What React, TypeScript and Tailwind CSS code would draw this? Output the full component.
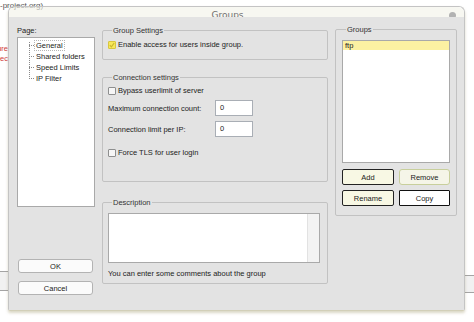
import type { ReactNode } from 'react';

const Group = ({ title, className, children }: { title: string; className?: string; children?: ReactNode }) => (
    <fieldset className={`border border-[#c2c2c2] rounded-[2px] ${className ?? ''}`}>
        <legend className="ml-[4px] px-[1px] leading-[9px] text-[#333]">{title}</legend>
        {children}
    </fieldset>
);

const Check = ({ label, hover }: { label: string; hover?: boolean }) => (
    <div className="flex items-center gap-[2px] h-[9px]">
        {hover ? (
            <span className="w-[8px] h-[8px] rounded-[1px] border border-[#d8c640] bg-[#f7e85a] flex items-center justify-center">
                <svg width="6" height="6" viewBox="0 0 6 6">
                    <path d="M0.8 3.2 L2.4 4.8 L5.2 1" fill="none" stroke="#c9b830" strokeWidth="1.2" />
                </svg>
            </span>
        ) : (
            <span className="w-[8px] h-[8px] rounded-[1px] border border-[#8e8f8f] bg-[#f6f6f6]" />
        )}
        <span className="text-[#222]">{label}</span>
    </div>
);

const Field = ({ label }: { label: string }) => (
    <div className="flex items-center h-[16px]">
        <span className="w-[107px] text-[#222]">{label}</span>
        <div className="w-[38px] h-[16px] bg-white border border-[#a9aeb5] pl-[4px] pt-[2px] leading-[9px] text-[#222]">0</div>
    </div>
);

export default function App() {
    const pages = ['General', 'Shared folders', 'Speed Limits', 'IP Filter'];

    return (
        <div className="relative w-[474px] h-[322px] overflow-hidden bg-white font-['Liberation_Sans',Arial,sans-serif] text-[7.5px] leading-[9px]">
            {/* stuff behind the dialog */}
            <div className="absolute left-0 top-[1px] text-[8px] leading-[9px] text-[#555]">-project.org)</div>
            <div className="absolute left-[-6px] top-[44px] w-[14px] text-right text-[7.5px] leading-[10px] text-[#d03a3a]">
                <div>ure</div>
                <div>sec</div>
            </div>
            <div className="absolute left-0 top-[271px] w-[12px] h-[20px] border-y border-[#a4a4a4] bg-[#f1f1f1]" />
            <div className="absolute right-0 top-[275px] w-[14px] h-[18px] border-y border-[#a4a4a4] bg-[#f1f1f1]" />

            {/* dialog window, glass frame */}
            <div className="absolute left-[8px] top-[6px] w-[457px] h-[305px] flex flex-col border border-[#c4c4c4] border-b-[#d2cfb8] rounded-t-[6px] rounded-b-[2px] shadow-[0_2px_3px_rgba(150,140,90,0.35)]">
                <div className="relative h-[10px] overflow-hidden rounded-t-[6px] bg-[#f1f1e8]/60 text-center">
                    <span className="block pt-[3px] pr-[18px] text-[9px] leading-[11px] text-[#707070] font-['DejaVu_Sans',sans-serif]">Groups</span>
                    <span className="absolute right-[8px] top-[5px] w-[7px] h-[7px] rounded-full bg-[#b2b2b2]" />
                </div>

                <div className="flex-1 flex gap-[7px] pl-[8px] pt-[9px] bg-[#e3e3e3]">
                    {/* left column */}
                    <div className="w-[78px] flex flex-col">
                        <div className="h-[9px] text-[#222]">Page:</div>
                        <div className="mt-[2px] h-[170px] bg-white border border-[#a9a9a9] flex">
                            <svg width="17" height="46" viewBox="0 0 17 46" className="shrink-0">
                                <g stroke="#8a8a8a" strokeDasharray="1 1" strokeWidth="1">
                                    <path d="M11.5 4 V41" />
                                    <path d="M11 7.5 H17" />
                                    <path d="M11 18.5 H17" />
                                    <path d="M11 29.5 H17" />
                                    <path d="M11 40.5 H17" />
                                </g>
                            </svg>
                            <div className="flex flex-col pt-[2px]">
                                {pages.map((p, i) => (
                                    <div key={p} className="h-[11px] flex items-center">
                                        <span className={`px-[1px] leading-[9px] text-[#222] ${i === 0 ? 'outline outline-1 outline-dotted outline-[#b5b5b5]' : ''}`}>{p}</span>
                                    </div>
                                ))}
                            </div>
                        </div>
                        <button className="mt-[52px] h-[14px] w-[75px] ml-[1px] rounded-[3px] border border-[#b3b3b3] bg-[#fbfbfb] text-[#222]">OK</button>
                        <button className="mt-[8px] h-[14px] w-[75px] ml-[1px] rounded-[3px] border border-[#b3b3b3] bg-[#fbfbfb] text-[#222]">Cancel</button>
                    </div>

                    {/* middle column */}
                    <div className="w-[226px] flex flex-col">
                        <Group title="Group Settings" className="h-[34px] pl-[5px]">
                            <div className="pt-[5px]">
                                <Check label="Enable access for users inside group." hover />
                            </div>
                        </Group>

                        <Group title="Connection settings" className="mt-[13px] h-[109px] pl-[5px]">
                            <div className="pt-[4px] flex flex-col">
                                <Check label="Bypass userlimit of server" />
                                <div className="mt-[5px]"><Field label="Maximum connection count:" /></div>
                                <div className="mt-[5px]"><Field label="Connection limit per IP:" /></div>
                                <div className="mt-[11px]"><Check label="Force TLS for user login" /></div>
                            </div>
                        </Group>

                        <Group title="Description" className="mt-[16px] h-[86px] pl-[5px]">
                            <div className="mt-[6px] w-[212px] h-[50px] bg-white border border-[#a9a9a9] flex justify-end">
                                <div className="w-[12px] h-full bg-[#f3f3f3] border-l border-[#e2e2e2]" />
                            </div>
                            <div className="mt-[6px] text-[#222]">You can enter some comments about the group</div>
                        </Group>
                    </div>

                    {/* right column */}
                    <div className="w-[122px] -mt-[1px]">
                        <Group title="Groups" className="h-[191px] pl-[6px]">
                            <div className="mt-[6px] w-[108px] h-[123px] bg-white border border-[#a9a9a9]">
                                <div className="h-[9px] bg-[#fcf1a2] pl-[2px] leading-[9px] text-[#222]">ftp</div>
                            </div>
                            <div className="mt-[6px] grid grid-cols-[52px_51px] gap-x-[5px] gap-y-[5px]">
                                <button className="h-[16px] rounded-[2px] border-[1.5px] border-[#222] bg-[#f8f8e4] text-[#222]">Add</button>
                                <button className="h-[16px] rounded-[3px] border border-[#c8cf9c] bg-[#f5f5e8] text-[#222]">Remove</button>
                                <button className="h-[16px] rounded-[2px] border-[1.5px] border-[#222] bg-[#f8f8e4] text-[#222]">Rename</button>
                                <button className="h-[16px] rounded-[1px] border-[1.5px] border-[#111] bg-white text-[#222]">Copy</button>
                            </div>
                        </Group>
                    </div>
                </div>
            </div>
        </div>
    );
}
